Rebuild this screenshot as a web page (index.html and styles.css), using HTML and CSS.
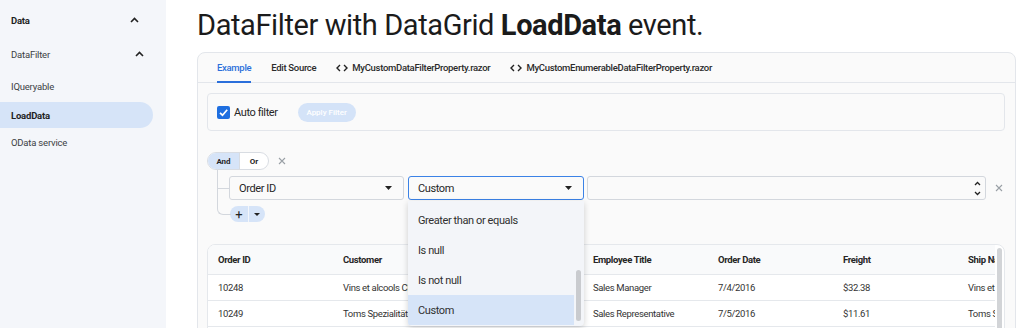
FILE: index.html
```html
<!DOCTYPE html>
<html>
<head>
<meta charset="utf-8">
<link rel="stylesheet" href="styles.css">
</head>
<body>
<aside class="sidebar">
  <div class="nav-item nav-group"><span>Data</span>
    <svg class="chev" width="9" height="6" viewBox="0 0 9 6"><path d="M1 5 L4.5 1.5 L8 5" fill="none" stroke="#222" stroke-width="1.6"/></svg>
  </div>
  <div class="nav-item nav-sub"><span>DataFilter</span>
    <svg class="chev chev-sub" width="9" height="6" viewBox="0 0 9 6"><path d="M1 5 L4.5 1.5 L8 5" fill="none" stroke="#222" stroke-width="1.6"/></svg>
  </div>
  <div class="nav-item nav-leaf">IQueryable</div>
  <div class="nav-item nav-leaf nav-active">LoadData</div>
  <div class="nav-item nav-leaf">OData service</div>
</aside>
<main class="content">
  <h1 class="title">DataFilter with DataGrid <b>LoadData</b> event.</h1>
  <section class="card">
    <nav class="tabs">
      <div class="tab tab-active"><span>Example</span></div>
      <div class="tab"><span>Edit Source</span></div>
      <div class="tab"><svg class="code" width="12" height="8" viewBox="0 0 12 8"><path d="M4 1 L1 4 L4 7 M8 1 L11 4 L8 7" fill="none" stroke="#222" stroke-width="1.4"/></svg><span>MyCustomDataFilterProperty.razor</span></div>
      <div class="tab"><svg class="code" width="12" height="8" viewBox="0 0 12 8"><path d="M4 1 L1 4 L4 7 M8 1 L11 4 L8 7" fill="none" stroke="#222" stroke-width="1.4"/></svg><span>MyCustomEnumerableDataFilterProperty.razor</span></div>
    </nav>
    <div class="card-body">
      <div class="toolbar">
        <span class="checkbox"><svg width="13" height="13" viewBox="0 0 13 13"><path d="M3 6.8 L5.5 9.2 L10.2 3.8" fill="none" stroke="#fff" stroke-width="1.7"/></svg></span>
        <span class="cb-label">Auto filter</span>
        <span class="apply-btn">Apply Filter</span>
      </div>

      <div class="filter">
        <div class="logic-row">
          <div class="logic">
            <span class="logic-opt logic-on">And</span>
            <span class="logic-opt">Or</span>
          </div>
          <svg class="xicon" width="8" height="8" viewBox="0 0 8 8"><path d="M1 1 L7 7 M7 1 L1 7" stroke="#9aa0a6" stroke-width="1.1"/></svg>
        </div>
        <div class="children">
          <div class="cond-row">
            <div class="select sel-prop"><span>Order ID</span><svg class="caret" width="7" height="4" viewBox="0 0 7 4"><path d="M0 0 H7 L3.5 4 Z" fill="#222"/></svg></div>
            <div class="select sel-op sel-focus"><span>Custom</span><svg class="caret" width="7" height="4" viewBox="0 0 7 4"><path d="M0 0 H7 L3.5 4 Z" fill="#222"/></svg>
              <div class="popup">
                <div class="opt">Greater than or equals</div>
                <div class="opt">Is null</div>
                <div class="opt">Is not null</div>
                <div class="opt opt-sel">Custom</div>
                <div class="popup-scroll"><div class="popup-thumb"></div></div>
              </div>
            </div>
            <div class="numeric">
              <div class="spin">
                <svg width="7" height="5" viewBox="0 0 7 5"><path d="M1 4 L3.5 1.5 L6 4" fill="none" stroke="#222" stroke-width="1.3"/></svg>
                <svg width="7" height="5" viewBox="0 0 7 5"><path d="M1 1 L3.5 3.5 L6 1" fill="none" stroke="#222" stroke-width="1.3"/></svg>
              </div>
            </div>
            <svg class="xicon row-x" width="8" height="8" viewBox="0 0 8 8"><path d="M1 1 L7 7 M7 1 L1 7" stroke="#9aa0a6" stroke-width="1.1"/></svg>
          </div>
          <div class="add-row">
            <div class="add-btn">
              <span class="add-plus">+</span>
              <span class="add-caret"><svg width="6" height="3" viewBox="0 0 6 3"><path d="M0 0 H6 L3 3 Z" fill="#222"/></svg></span>
            </div>
          </div>
        </div>
      </div>

      <div class="grid">
        <div class="grid-view">
          <table class="table">
            <thead>
              <tr><th>Order ID</th><th>Customer</th><th>Employee</th><th>Employee Title</th><th>Order Date</th><th>Freight</th><th>Ship Name</th></tr>
            </thead>
            <tbody>
              <tr><td>10248</td><td>Vins et alcools Chevalier</td><td>Steven Buchanan</td><td>Sales Manager</td><td>7/4/2016</td><td>$32.38</td><td>Vins et alcools Chevalier</td></tr>
              <tr><td>10249</td><td>Toms Spezialitäten</td><td>Michael Suyama</td><td>Sales Representative</td><td>7/5/2016</td><td>$11.61</td><td>Toms Spezialitäten</td></tr>
            </tbody>
          </table>
        </div>
        <div class="grid-scroll"><div class="grid-thumb"></div></div>
      </div>
    </div>
  </section>
</main>
</body>
</html>
```
FILE: styles.css
```css
* { box-sizing: border-box; }
html, body { margin: 0; height: 328px; overflow: hidden; }
body {
  display: flex;
  font-family: Roboto, "Liberation Sans", sans-serif;
  color: #262626;
  background: #fff;
}

/* sidebar */
.sidebar {
  width: 166px;
  flex: none;
  background: #f4f6fa;
  padding-top: 3px;
}
.nav-item {
  display: flex;
  align-items: center;
  padding-left: 11px;
  font-size: 9.5px;
  letter-spacing: -0.2px;
  color: #3c3f44;
}
.nav-group { height: 34px; font-weight: 700; color: #1f1f1f; }
.nav-sub { height: 34px; }
.nav-leaf { height: 30px; }
.chev { margin-left: auto; margin-right: 27px; }
.chev-sub { margin-right: 22px; }
.nav-active {
  height: 26px;
  margin: 1px 13px 1px 0;
  background: #d6e4f8;
  border-radius: 0 13px 13px 0;
  font-weight: 700;
  color: #1f1f1f;
}
.nav-active + .nav-leaf { height: 26px; }

/* main */
.content {
  flex: 1;
  min-width: 0;
  padding: 7px 8px 0 31px;
}
.title {
  margin: 0 0 9px;
  font-size: 29px;
  letter-spacing: -0.4px;
  line-height: 36px;
  font-weight: 400;
  color: #1b1b1b;
}
.title b { font-weight: 700; }

.card {
  border: 1px solid #e3e6eb;
  border-radius: 8px;
  background: #fafafa;
  height: 290px;
  overflow: hidden;
}
.tabs {
  display: flex;
  height: 30px;
  padding-left: 9px;
  border-bottom: 1px solid #e3e6eb;
}
.tab {
  display: flex;
  align-items: center;
  padding: 0 10px;
  font-size: 9.5px;
  letter-spacing: -0.3px;
  font-weight: 500;
  color: #2b2b2b;
}
.tab .code { margin-right: 4px; }
.tab-active { color: #2a6fdb; }
.tab-active span {
  border-bottom: 2px solid #2a6fdb;
  padding-top: 2px;
  line-height: 27px;
}

.card-body { padding: 10px 10px 0 9px; }

.toolbar {
  height: 38px;
  border: 1px solid #e3e6eb;
  border-radius: 4px;
  display: flex;
  align-items: center;
  padding-left: 9px;
}
.checkbox {
  width: 13px;
  height: 13px;
  background: #1f6fe0;
  border-radius: 2px;
  display: flex;
}
.cb-label { margin-left: 4px; font-size: 11px; letter-spacing: -0.4px; color: #262626; }
.apply-btn {
  margin-left: 20px;
  height: 19px;
  width: 58px;
  border-radius: 10px;
  background: #d4e3f8;
  color: #fff;
  font-size: 8px;
  font-weight: 500;
  display: flex;
  align-items: center;
  justify-content: center;
}

/* filter */
.filter { margin-top: 21px; }
.logic-row { display: flex; align-items: center; height: 18px; }
.logic {
  display: flex;
  height: 18px;
  border: 1px solid #d8dce2;
  border-radius: 9px;
  overflow: hidden;
  background: #fff;
}
.logic-opt {
  width: 28px;
  display: flex;
  align-items: center;
  justify-content: center;
  font-size: 8px;
  font-weight: 700;
  color: #262626;
}
.logic-on { background: #d6e4f8; border-right: 1px solid #d8dce2; width: 32px; }
.xicon { margin-left: 9px; }

.children {
  margin-left: 10px;
  padding-left: 12px;
  position: relative;
}
.cond-row, .add-row { position: relative; }
.cond-row { display: flex; align-items: center; margin-top: 6px; }
.cond-row::before {
  content: "";
  position: absolute;
  left: -12px;
  top: -6px;
  width: 12px;
  height: 18px;
  border-left: 1px solid #d3d7dd;
  border-bottom: 1px solid #d3d7dd;
}
.add-row { margin-top: 6px; padding-left: 1px; }
.add-row::before {
  content: "";
  position: absolute;
  left: -12px;
  top: -19px;
  width: 13px;
  height: 27px;
  border-left: 1px solid #d3d7dd;
  border-bottom: 1px solid #d3d7dd;
  border-bottom-left-radius: 6px;
}

.select {
  height: 24px;
  border: 1px solid #d3d7dd;
  border-radius: 3px;
  background: #fafafa;
  display: flex;
  align-items: center;
  padding: 0 11px 0 9px;
  font-size: 11px;
  letter-spacing: -0.4px;
  color: #262626;
  position: relative;
}
.select .caret { margin-left: auto; }
.sel-prop { width: 175px; }
.sel-op { width: 176px; margin-left: 4px; }
.sel-focus { border-color: #3b82e6; }
.numeric {
  width: 399px;
  height: 24px;
  margin-left: 3px;
  border: 1px solid #d3d7dd;
  border-radius: 3px;
  display: flex;
  justify-content: flex-end;
  align-items: center;
  padding-right: 4px;
}
.spin { display: flex; flex-direction: column; gap: 5px; }
.row-x { margin-left: 9px; }

.add-btn {
  display: flex;
  width: 35px;
  height: 16px;
  border-radius: 8px;
  background: #d6e4f8;
  overflow: hidden;
}
.add-plus {
  width: 19px;
  display: flex;
  align-items: center;
  justify-content: center;
  font-size: 13px;
  line-height: 1;
  color: #222;
  border-right: 1px solid #f3f6fb;
}
.add-caret { flex: 1; display: flex; align-items: center; justify-content: center; }

.popup {
  position: absolute;
  top: 24px;
  left: -1px;
  width: 176px;
  height: 125px;
  padding-top: 4px;
  background: #f3f5f9;
  border-radius: 0 0 4px 4px;
  box-shadow: 0 2px 6px rgba(0,0,0,0.18);
  z-index: 5;
  overflow: hidden;
}
.opt {
  height: 30px;
  display: flex;
  align-items: center;
  padding-left: 10px;
  margin-right: 10px;
  font-size: 11px;
  letter-spacing: -0.4px;
  color: #303030;
}
.opt-sel { background: #d6e4f8; }
.popup-scroll {
  position: absolute;
  right: 0;
  top: 0;
  bottom: 0;
  width: 10px;
}
.popup-thumb {
  position: absolute;
  left: 2px;
  width: 5px;
  top: 69px;
  height: 51px;
  border-radius: 3px;
  background: #c9cbcf;
}

/* grid */
.grid {
  margin-top: 22px;
  border: 1px solid #e5e8ec;
  border-radius: 8px 8px 0 0;
  background: #fff;
  display: flex;
  overflow: hidden;
  height: 100px;
}
.grid-view { flex: 1; overflow: hidden; }
.table {
  border-collapse: collapse;
  table-layout: fixed;
  width: 875px;
}
.table th, .table td {
  width: 125px;
  text-align: left;
  padding: 0 10px;
  white-space: nowrap;
  overflow: hidden;
  font-size: 9.5px;
  letter-spacing: -0.35px;
  color: #262626;
}
.table th {
  height: 29px;
  font-weight: 700;
  background: #f9fafb;
  border-bottom: 1px solid #e5e8ec;
}
.table td {
  height: 26px;
  border-bottom: 1px solid #e5e8ec;
  color: #333;
}
.grid-scroll {
  width: 9px;
  flex: none;
  padding: 3px 2px 0;
}
.grid-thumb {
  width: 5px;
  height: 100px;
  border-radius: 3px;
  background: #d2d4d7;
}
```
